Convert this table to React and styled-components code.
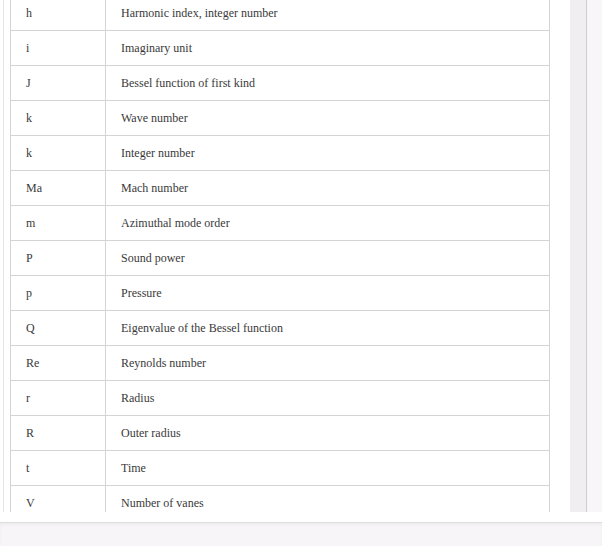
import React from "react";
import styled, { createGlobalStyle } from "styled-components";

const rows = [
  ["h", "Harmonic index, integer number"],
  ["i", "Imaginary unit"],
  ["J", "Bessel function of first kind"],
  ["k", "Wave number"],
  ["k", "Integer number"],
  ["Ma", "Mach number"],
  ["m", "Azimuthal mode order"],
  ["P", "Sound power"],
  ["p", "Pressure"],
  ["Q", "Eigenvalue of the Bessel function"],
  ["Re", "Reynolds number"],
  ["r", "Radius"],
  ["R", "Outer radius"],
  ["t", "Time"],
  ["V", "Number of vanes"],
];

const GlobalStyle = createGlobalStyle`
  html, body {
    margin: 0;
    padding: 0;
    background: #ffffff;
  }
  body {
    width: 602px;
    height: 546px;
    overflow: hidden;
  }
`;

const Page = styled.div`
  display: flex;
  flex-direction: column;
  width: 602px;
  height: 546px;
`;

const Main = styled.div`
  display: flex;
  height: 512px;
`;

const Content = styled.div`
  width: 567px;
  height: 512px;
  overflow: hidden;
  border-left: 1px solid #e6e4e6;
  margin-left: 3px;
  padding-left: 6px;
  box-sizing: border-box;
`;

const Table = styled.table`
  border-collapse: collapse;
  width: 540px;
  margin-top: -5px;
  font-family: "Liberation Serif", "Times New Roman", serif;
  font-size: 12px;
  color: #3a3a3a;
`;

const Cell = styled.td`
  border: 1px solid #d4d4d4;
  height: 35px;
  padding: 0 15px;
  box-sizing: border-box;
  width: ${({ $w }) => $w || "auto"};
  vertical-align: middle;
`;

const Track = styled.div`
  width: 32px;
  height: 512px;
  display: flex;
`;

const TrackBand = styled.div`
  width: 16px;
  background: #f1eef1;
  border-right: 1px solid #cfcdd0;
`;

const TrackRest = styled.div`
  flex: 1;
  background: #f8f6f8;
`;

const BottomGap = styled.div`
  height: 10px;
  background: #ffffff;
`;

const BottomBar = styled.div`
  flex: 1;
  background: #f7f5f7;
  border-top: 1px solid #dedcde;
  box-shadow: inset 0 2px 3px rgba(0, 0, 0, 0.04);
`;

export default function App() {
  return (
    <>
      <GlobalStyle />
      <Page>
        <Main>
          <Content>
            <Table>
              <tbody>
                {rows.map(([sym, desc], i) => (
                  <tr key={i}>
                    <Cell $w="95px">{sym}</Cell>
                    <Cell>{desc}</Cell>
                  </tr>
                ))}
              </tbody>
            </Table>
          </Content>
          <Track>
            <TrackBand />
            <TrackRest />
          </Track>
        </Main>
        <BottomGap />
        <BottomBar />
      </Page>
    </>
  );
}
